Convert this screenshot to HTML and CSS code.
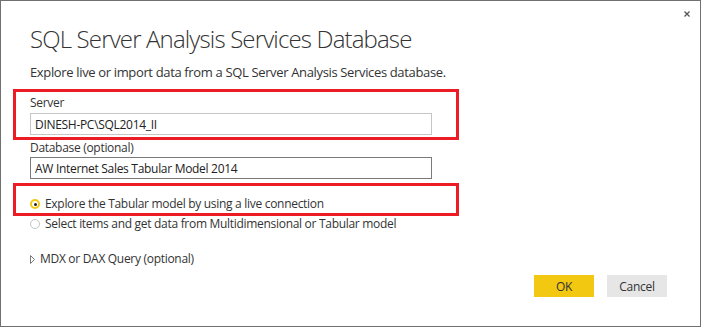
FILE: index.html
```html
<!DOCTYPE html>
<html lang="en">
<head>
  <meta charset="UTF-8">
  <title>SQL Server Analysis Services Database</title>
  <link rel="stylesheet" href="styles.css">
</head>
<body>
  <div class="dialog">
    <div class="titlebar">
      <button class="close" aria-label="Close">
        <svg width="6" height="6" viewBox="0 0 6 6"><path d="M0.5 0.5 L5.5 5.5 M5.5 0.5 L0.5 5.5" stroke="#555" stroke-width="1.3"/></svg>
      </button>
    </div>

    <h1 class="title">SQL Server Analysis Services Database</h1>
    <p class="subtitle">Explore live or import data from a SQL Server Analysis Services database.</p>

    <div class="highlight server-box">
      <label class="field-label" for="server">Server</label>
      <input class="field light" id="server" type="text" value="DINESH-PC\SQL2014_II">
    </div>

    <div class="field-group">
      <label class="field-label" for="database">Database (optional)</label>
      <input class="field" id="database" type="text" value="AW Internet Sales Tabular Model 2014">
    </div>

    <div class="highlight radio-box">
      <label class="radio">
        <span class="dot checked"></span>
        Explore the Tabular model by using a live connection
      </label>
    </div>
    <label class="radio second">
      <span class="dot"></span>
      Select items and get data from Multidimensional or Tabular model
    </label>

    <div class="expander">
      <svg width="5" height="9" viewBox="0 0 5 9"><path d="M0.5 0.5 L4.5 4.5 L0.5 8.5 Z" fill="none" stroke="#777" stroke-width="1"/></svg>
      <span>MDX or DAX Query (optional)</span>
    </div>

    <div class="actions">
      <button class="btn ok">OK</button>
      <button class="btn cancel">Cancel</button>
    </div>
  </div>
</body>
</html>
```

FILE: styles.css
```css
body {
  margin: 0;
  padding: 0;
  background-color: #fff;
  font-family: 'Segoe UI', 'Open Sans', sans-serif;
  font-size: 12px;
  color: #333;
}

.dialog {
  width: 701px;
  height: 327px;
  box-sizing: border-box;
  border: 1px solid #707070;
  padding: 0 12px;
  display: flex;
  flex-direction: column;
}

.titlebar {
  display: flex;
  justify-content: flex-end;
  height: 22px;
  flex-shrink: 0;
}

.close {
  border: none;
  background: none;
  padding: 0;
  margin: 10px -2px 0 0;
  width: 6px;
  height: 6px;
  display: flex;
}

.title {
  margin: 0 0 0 17px;
  font-size: 24px;
  font-weight: 300;
  line-height: 32px;
  letter-spacing: -0.85px;
  color: #333;
}

.subtitle {
  margin: 9px 0 0 17px;
  font-size: 13px;
  line-height: 16px;
  letter-spacing: -0.35px;
}

.highlight {
  border: 3px solid #ed1c24;
  width: 446px;
  box-sizing: border-box;
  flex-shrink: 0;
}

.server-box {
  margin-top: 9px;
  padding: 3px 0 2px 14px;
}

.field-label {
  display: block;
  line-height: 16px;
  letter-spacing: -0.3px;
  margin-bottom: 2px;
}

.field {
  display: block;
  box-sizing: border-box;
  width: 402px;
  height: 22px;
  margin: 0;
  padding: 0 4px;
  border: 1px solid #7a7a7a;
  font-family: inherit;
  font-size: 12px;
  letter-spacing: -0.3px;
  color: #222;
  background: #fff;
}

.field.light {
  border-color: #c6c6c6;
}

.field-group {
  margin: 0 0 0 17px;
}

.field-group .field-label {
  margin-bottom: 1px;
}

.radio-box {
  margin-top: 4px;
  padding: 10px 0 1px 14px;
}

.radio {
  display: flex;
  align-items: center;
  gap: 5px;
  height: 16px;
  line-height: 16px;
  letter-spacing: -0.3px;
}

.radio.second {
  margin-left: 17px;
  flex-shrink: 0;
}

.dot {
  width: 10px;
  height: 10px;
  box-sizing: border-box;
  border: 1px solid #c4c4c4;
  border-radius: 50%;
  background: #fff;
  position: relative;
  flex-shrink: 0;
}

.dot.checked {
  border: 2px solid #f2c811;
}

.dot.checked::after {
  content: '';
  position: absolute;
  left: 1.5px;
  top: 1.5px;
  width: 3px;
  height: 3px;
  border-radius: 50%;
  background: #222;
}

.expander {
  display: flex;
  align-items: center;
  gap: 5px;
  height: 16px;
  margin: 19px 0 0 17px;
  line-height: 16px;
  letter-spacing: -0.3px;
}

.actions {
  display: flex;
  justify-content: flex-end;
  gap: 13px;
  margin-top: auto;
  margin-bottom: 29px;
  padding-right: 21px;
}

.btn {
  width: 60px;
  height: 22px;
  padding: 0;
  border: none;
  font-family: inherit;
  font-size: 12px;
  color: #333;
  letter-spacing: -0.3px;
}

.btn.ok {
  background-color: #f2c811;
}

.btn.cancel {
  background-color: #e6e6e6;
}
```
